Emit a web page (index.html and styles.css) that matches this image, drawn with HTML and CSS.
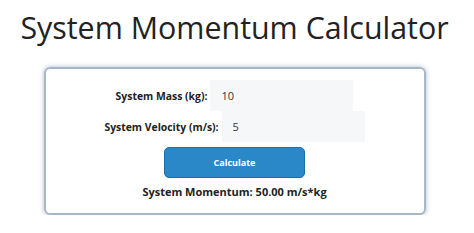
FILE: index.html
```html
<!DOCTYPE html>
<html lang="en">
<head>
    <meta charset="UTF-8">
    <meta name="viewport" content="width=device-width, initial-scale=1.0">
    <title>System Momentum Calculator</title>
    <link rel="stylesheet" href="styles.css">
</head>
<body>
    <h1>System Momentum Calculator</h1>
    <div class="calculator">
        <div class="form-row">
            <label for="mass">System Mass (kg):</label>
            <input type="text" id="mass" value="10">
        </div>
        <div class="form-row">
            <label for="velocity">System Velocity (m/s):</label>
            <input type="text" id="velocity" value="5">
        </div>
        <button class="calc-button" onclick="calculate()">Calculate</button>
        <div class="result" id="result">System Momentum: 50.00 m/s*kg</div>
    </div>

    <script>
        function calculate() {
            const m = parseFloat(document.getElementById('mass').value);
            const v = parseFloat(document.getElementById('velocity').value);
            document.getElementById('result').textContent = 'System Momentum: ' + (m * v).toFixed(2) + ' m/s*kg';
        }
    </script>
</body>
</html>
```

FILE: styles.css
```css
body, html {
    margin: 0;
    padding: 0;
    font-family: 'Open Sans', 'Noto Sans', sans-serif;
    background-color: #fff;
    color: #222;
}
body {
    padding-right: 5px;
}
h1 {
    margin: 4px 0 0;
    font-size: 30.4px;
    font-weight: normal;
    text-align: center;
    line-height: 48px;
    color: #222;
}
.calculator {
    width: 378px;
    margin: 15px auto 0;
    padding: 11px 0 14px;
    border: 2px solid #a7b6c9;
    border-radius: 6px;
    box-shadow: 0 0 5px rgba(70, 100, 150, 0.45);
    display: flex;
    flex-direction: column;
    align-items: center;
}
.form-row {
    display: flex;
    align-items: center;
}
.form-row label {
    font-size: 10.4px;
    font-weight: bold;
    margin-right: 3px;
}
.form-row input {
    width: 143px;
    height: 31px;
    box-sizing: border-box;
    padding: 0 0 0 11px;
    border: none;
    background-color: #f6f7f8;
    font-family: inherit;
    font-size: 11px;
    color: #333;
}
.calc-button {
    margin-top: 5px;
    width: 141px;
    height: 31px;
    background-color: #2a88c8;
    color: white;
    border: 1px solid #1f6ea6;
    border-radius: 5px;
    font-family: inherit;
    font-size: 9px;
    font-weight: bold;
    cursor: pointer;
}
.result {
    margin-top: 6px;
    font-size: 11px;
    font-weight: bold;
}
```
